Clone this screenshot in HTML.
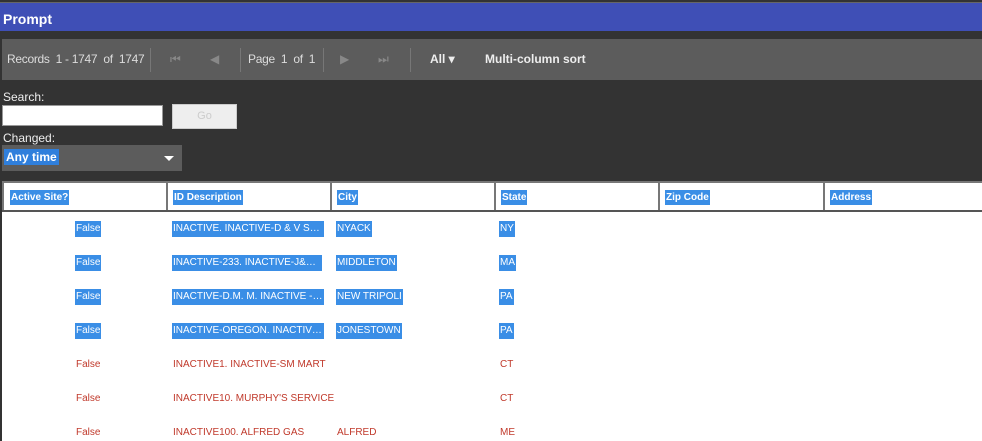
<!DOCTYPE html>
<html><head><style>
body{margin:0;width:982px;height:439px;overflow:hidden;background:#333;font-family:"Liberation Sans",sans-serif;position:relative}
.a{position:absolute}
.title{left:0;top:2px;width:982px;height:29px;background:#3f4fb6;color:#fff;font-weight:bold;font-size:14px;line-height:32px;padding-left:3px;box-sizing:border-box;border-top:1px solid #666}
.tb{left:2px;top:39px;width:980px;height:41px;background:#5c5c5c;color:#ddd;font-size:12px}
.tb span{position:absolute;top:13px;white-space:nowrap}
.sep{position:absolute;top:9px;width:1px;height:24px;background:#777}
.hl{background:#3a8ee6;color:#fff}
.lbl{color:#eee;font-size:12px}
.tbl{left:2px;top:181px;width:980px;height:258px;background:#fff;border-top:2px solid #777}
.hd{position:absolute;top:0;height:27px;border-bottom:2px solid #555;width:980px}
.vl{position:absolute;top:0;width:2px;height:27px;background:#777}
.h{position:absolute;top:7px;font-size:10px;font-weight:bold;padding:2px 1px}
.c{position:absolute;font-size:10px;padding:2px 1px;white-space:nowrap;overflow:hidden;text-overflow:ellipsis;line-height:12px}
.r{color:#c0392b}
</style></head><body>
<div class="a title">Prompt</div>
<div class="a tb">
<span style="left:5px;letter-spacing:-0.3px">Records&nbsp; 1 - 1747&nbsp; of&nbsp; 1747</span>
<div class="sep" style="left:148px"></div>
<span style="left:168px;color:#888">⏮</span><span style="left:208px;color:#888">◀</span>
<div class="sep" style="left:238px"></div>
<span style="left:246px;letter-spacing:-0.3px">Page&nbsp; 1&nbsp; of&nbsp; 1</span>
<div class="sep" style="left:321px"></div>
<span style="left:338px;color:#888">▶</span><span style="left:376px;color:#888">⏭</span>
<div class="sep" style="left:408px"></div>
<span style="left:428px;font-weight:bold;color:#eee">All ▾</span>
<span style="left:483px;font-weight:bold;color:#eee">Multi-column sort</span>
</div>
<div class="a lbl" style="left:3px;top:90px">Search:</div>
<div class="a" style="left:2px;top:105px;width:161px;height:21px;background:#fff;border:1px solid #999;box-sizing:border-box"></div>
<div class="a" style="left:172px;top:104px;width:65px;height:25px;background:#eee;border:1px solid #ccc;box-sizing:border-box;color:#ccc;font-size:11px;text-align:center;line-height:23px">Go</div>
<div class="a lbl" style="left:3px;top:131px">Changed:</div>
<div class="a" style="left:2px;top:145px;width:180px;height:26px;background:#5c5c5c"></div>
<div class="a hl" style="left:4px;top:149px;padding:1px 2px;font-size:12px;font-weight:bold;background:#2f7fdc">Any time</div>
<div class="a" style="left:164px;top:156px;width:0;height:0;border-left:5px solid transparent;border-right:5px solid transparent;border-top:5px solid #fff"></div>
<div class="a tbl">
<div class="hd">
<div class="vl" style="left:0"></div><div class="vl" style="left:164px"></div><div class="vl" style="left:328px"></div><div class="vl" style="left:492px"></div><div class="vl" style="left:656px"></div><div class="vl" style="left:821px"></div>
<div class="h hl" style="left:8px">Active Site?</div>
<div class="h hl" style="left:171px">ID Description</div>
<div class="h hl" style="left:335px">City</div>
<div class="h hl" style="left:499px">State</div>
<div class="h hl" style="left:663px">Zip Code</div>
<div class="h hl" style="left:828px">Address</div>
</div>
<div class="c hl" style="left:73px;top:38px">False</div><div class="c hl" style="left:170px;top:38px;width:150px">INACTIVE. INACTIVE-D &amp; V SERVICE</div><div class="c hl" style="left:334px;top:38px">NYACK</div><div class="c hl" style="left:497px;top:38px">NY</div>
<div class="c hl" style="left:73px;top:72px">False</div><div class="c hl" style="left:170px;top:72px;width:148px">INACTIVE-233. INACTIVE-J&amp;M COMPANY</div><div class="c hl" style="left:334px;top:72px">MIDDLETON</div><div class="c hl" style="left:497px;top:72px">MA</div>
<div class="c hl" style="left:73px;top:106px">False</div><div class="c hl" style="left:170px;top:106px;width:150px">INACTIVE-D.M. M. INACTIVE - DMM</div><div class="c hl" style="left:334px;top:106px">NEW TRIPOLI</div><div class="c hl" style="left:497px;top:106px">PA</div>
<div class="c hl" style="left:73px;top:140px">False</div><div class="c hl" style="left:170px;top:140px;width:150px">INACTIVE-OREGON. INACTIVE-COMPANY</div><div class="c hl" style="left:334px;top:140px">JONESTOWN</div><div class="c hl" style="left:497px;top:140px">PA</div>
<div class="c r" style="left:73px;top:174px">False</div><div class="c r" style="left:170px;top:174px">INACTIVE1. INACTIVE-SM MART</div><div class="c r" style="left:497px;top:174px">CT</div>
<div class="c r" style="left:73px;top:208px">False</div><div class="c r" style="left:170px;top:208px">INACTIVE10. MURPHY'S SERVICE</div><div class="c r" style="left:497px;top:208px">CT</div>
<div class="c r" style="left:73px;top:242px">False</div><div class="c r" style="left:170px;top:242px">INACTIVE100. ALFRED GAS</div><div class="c r" style="left:334px;top:242px">ALFRED</div><div class="c r" style="left:497px;top:242px">ME</div>
</div>
</body></html>
